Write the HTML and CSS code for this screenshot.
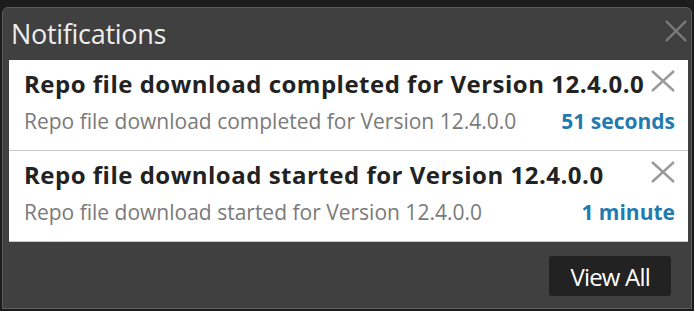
FILE: index.html
```html
<!DOCTYPE html>
<html lang="en">
<head>
  <meta charset="UTF-8">
  <meta name="viewport" content="width=device-width, initial-scale=1.0">
  <title>Notifications</title>
  <link rel="stylesheet" href="styles.css">
</head>
<body>

  <div class="panel">
    <div class="panel-header">
      <h2 class="panel-title">Notifications</h2>
      <button class="close-button panel-close" aria-label="Close">
        <svg width="22" height="22" viewBox="0 0 22 22"><path d="M1 1 L21 21 M21 1 L1 21" /></svg>
      </button>
    </div>

    <div class="notification-list">
      <div class="notification">
        <div class="notification-top">
          <span class="notification-title">Repo file download completed for Version 12.4.0.0</span>
          <button class="close-button item-close" aria-label="Dismiss">
            <svg width="24" height="22" viewBox="0 0 24 22"><path d="M1 1 L23 21 M23 1 L1 21" /></svg>
          </button>
        </div>
        <div class="notification-bottom">
          <span class="notification-text">Repo file download completed for Version 12.4.0.0</span>
          <span class="notification-time">51 seconds</span>
        </div>
      </div>

      <div class="notification">
        <div class="notification-top">
          <span class="notification-title">Repo file download started for Version 12.4.0.0</span>
          <button class="close-button item-close" aria-label="Dismiss">
            <svg width="24" height="22" viewBox="0 0 24 22"><path d="M1 1 L23 21 M23 1 L1 21" /></svg>
          </button>
        </div>
        <div class="notification-bottom">
          <span class="notification-text">Repo file download started for Version 12.4.0.0</span>
          <span class="notification-time">1 minute</span>
        </div>
      </div>
    </div>

    <div class="panel-footer">
      <button class="view-all">View All</button>
    </div>
  </div>

</body>
</html>
```

FILE: styles.css
```css
body {
  margin: 0;
  font-family: "Open Sans", Arial, sans-serif;
  background-color: #1c1c1c;
  height: 311px;
  overflow: hidden;
}
.panel {
  margin: 7px 2px 0 2px;
  height: 300px;
  background-color: #404040;
  border: 1px solid #5c5c5c;
  border-radius: 6px 6px 0 0;
  padding: 0 3px 0 6px;
  display: flex;
  flex-direction: column;
}
.panel-header {
  height: 52px;
  display: flex;
  justify-content: space-between;
  align-items: flex-start;
}
.panel-title {
  margin: 8px 0 0 2px;
  font-size: 27px;
  font-weight: 400;
  color: #eeeeee;
  line-height: 36px;
  letter-spacing: -0.3px;
}
.close-button {
  background: none;
  border: none;
  padding: 0;
  cursor: pointer;
  display: flex;
}
.close-button svg path {
  fill: none;
  stroke-width: 2.4;
}
.panel-close {
  margin: 12px 1px 0 0;
}
.panel-close svg path {
  stroke: #7c7c7c;
}
.notification {
  background-color: #ffffff;
  border-bottom: 1px solid #c8c8c8;
  height: 91px;
  padding: 0 13px 0 15px;
  box-sizing: border-box;
}
.notification-top {
  display: flex;
  justify-content: space-between;
  align-items: flex-start;
}
.notification-title {
  font-size: 24px;
  line-height: 32px;
  font-weight: 700;
  color: #222222;
  margin-top: 8px;
  letter-spacing: 0.5px;
}
.item-close {
  margin-top: 10px;
}
.item-close svg path {
  stroke: #9a9a9a;
}
.notification-bottom {
  display: flex;
  justify-content: space-between;
  align-items: baseline;
  margin-top: 7px;
  line-height: 28px;
}
.notification-text {
  font-size: 21px;
  color: #7a7a7a;
}
.notification-time {
  font-size: 21px;
  font-weight: 700;
  color: #1f7bb0;
}
.panel-footer {
  display: flex;
  justify-content: flex-end;
  padding: 14px 17px 0 0;
}
.view-all {
  background-color: #222222;
  border: none;
  border-radius: 3px;
  color: #ffffff;
  font-family: "Open Sans", Arial, sans-serif;
  font-size: 24px;
  padding: 0 21px;
  height: 40px;
  cursor: pointer;
  letter-spacing: -0.8px;
}
```
